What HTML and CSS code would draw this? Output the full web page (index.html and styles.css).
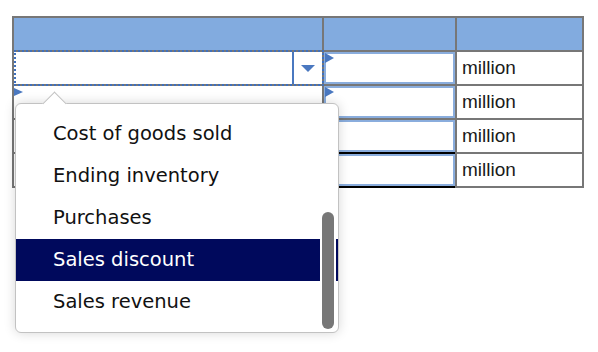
FILE: index.html
```html
<!DOCTYPE html>
<html lang="en">
<head>
  <meta charset="UTF-8" />
  <meta name="viewport" content="width=device-width, initial-scale=1.0" />
  <title>Answer table</title>
  <link rel="stylesheet" href="styles.css">
</head>
<body>

  <div class="wrap">
    <div class="sheet">
      <div class="cell head"></div>
      <div class="cell head"></div>
      <div class="cell head"></div>

      <div class="cell select">
        <div class="select-btn"><span class="arrow"></span></div>
      </div>
      <div class="cell field flag"></div>
      <div class="cell unit">million</div>

      <div class="cell flag small"></div>
      <div class="cell field flag"></div>
      <div class="cell unit">million</div>

      <div class="cell"></div>
      <div class="cell field dark"></div>
      <div class="cell unit">million</div>

      <div class="cell"></div>
      <div class="cell field dark"></div>
      <div class="cell unit">million</div>
    </div>

    <div class="menu">
      <ul class="menu-list">
        <li>Cost of goods sold</li>
        <li>Ending inventory</li>
        <li>Purchases</li>
        <li class="active">Sales discount</li>
        <li>Sales revenue</li>
      </ul>
      <div class="scroll"><div class="thumb"></div></div>
    </div>
  </div>

</body>
</html>
```

FILE: styles.css
```css
* {
  box-sizing: border-box;
  margin: 0;
  padding: 0;
}
html,
body {
  height: 100%;
}
body {
  font-family: "Liberation Sans", Arial, sans-serif;
  background-color: #fff;
  color: #1a1a1a;
  padding: 16px 0 0 12px;
}
.wrap {
  position: relative;
  width: max-content;
  height: 336px;
}
.sheet {
  display: grid;
  grid-template-columns: 308px 131px 125px;
  grid-auto-rows: 32px;
  gap: 2px;
  padding: 2px;
  background-color: #777;
}
.cell {
  background-color: #fff;
  position: relative;
}
.head {
  background-color: #82abdf;
}
.unit {
  display: flex;
  align-items: center;
  padding-left: 5px;
  font-size: 19px;
}
.field {
  box-shadow: inset 0 0 0 2px #8aaddd;
}
.field.dark {
  box-shadow: inset 0 0 0 2px #8aaddd, inset 0 -1px 0 #000, 0 2px 0 #000;
}
.flag::before {
  content: "";
  position: absolute;
  top: 1px;
  left: 1px;
  border-left: 9px solid #4a78c0;
  border-top: 5.5px solid transparent;
  border-bottom: 5.5px solid transparent;
}
.flag.small::before {
  top: 2px;
  left: 0;
  border-top-width: 4.5px;
  border-bottom-width: 4.5px;
}
.select {
  display: flex;
  justify-content: flex-end;
}
.select::after {
  content: "";
  position: absolute;
  top: -2px;
  right: -2px;
  bottom: -2px;
  left: 0;
  border: 2px dotted #3f70bd;
}
.select-btn {
  width: 30px;
  border-left: 2px solid #4a78c0;
  display: flex;
  align-items: center;
  justify-content: center;
}
.arrow {
  border-top: 7px solid #4a78c0;
  border-left: 7px solid transparent;
  border-right: 7px solid transparent;
}
.menu {
  position: absolute;
  left: 3px;
  top: 87px;
  width: 324px;
  height: 230px;
  background: #fff;
  border: 1px solid #c2c2c2;
  border-radius: 6px;
  box-shadow: 0 0 12px rgba(0, 0, 0, 0.16);
  padding-top: 9px;
  font-family: "DejaVu Sans", Verdana, sans-serif;
  font-size: 19.5px;
  color: #111;
}
.menu::before {
  content: "";
  position: absolute;
  top: -9px;
  left: 30px;
  width: 16px;
  height: 16px;
  background: #fff;
  border-top: 1px solid #c2c2c2;
  border-left: 1px solid #c2c2c2;
  transform: rotate(45deg);
}
.menu-list {
  list-style: none;
  position: relative;
}
.menu-list li {
  height: 42px;
  line-height: 42px;
  padding-left: 37px;
  white-space: nowrap;
}
.menu-list li.active {
  background-color: #00095c;
  color: #fff;
}
.scroll {
  position: absolute;
  top: 0;
  right: 2px;
  bottom: 0;
  width: 16px;
  background: #fff;
  border-radius: 0 6px 6px 0;
}
.thumb {
  position: absolute;
  left: 2px;
  right: 2px;
  top: 108px;
  bottom: 3px;
  background-color: #777;
  border-radius: 6px;
}
```
